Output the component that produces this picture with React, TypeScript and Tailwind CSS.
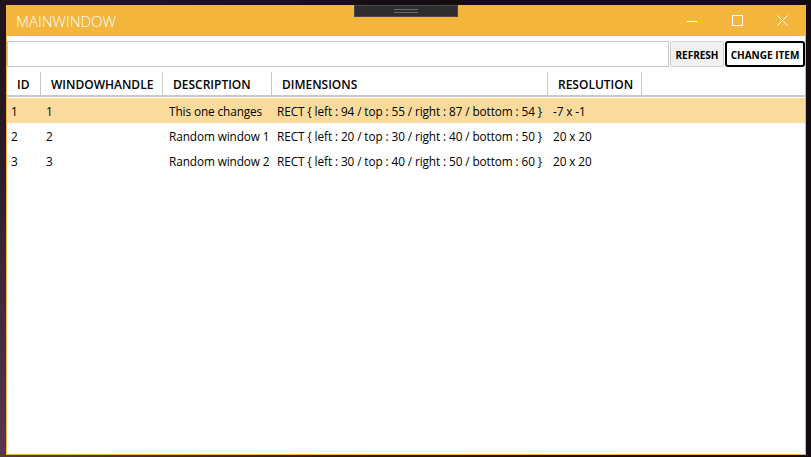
import React from 'react';

const COLUMNS = [
  { key: 'id', label: 'ID', width: 34, pad: 4 },
  { key: 'handle', label: 'WINDOWHANDLE', width: 122, pad: 5 },
  { key: 'description', label: 'DESCRIPTION', width: 109, pad: 6 },
  { key: 'dimensions', label: 'DIMENSIONS', width: 276, pad: 5 },
  { key: 'resolution', label: 'RESOLUTION', width: 94, pad: 5 },
] as const;

type Row = Record<(typeof COLUMNS)[number]['key'], string>;

const ROWS: Row[] = [
  {
    id: '1',
    handle: '1',
    description: 'This one changes',
    dimensions: 'RECT { left : 94 / top : 55 / right : 87 / bottom : 54 }',
    resolution: '-7 x -1',
  },
  {
    id: '2',
    handle: '2',
    description: 'Random window 1',
    dimensions: 'RECT { left : 20 / top : 30 / right : 40 / bottom : 50 }',
    resolution: '20 x 20',
  },
  {
    id: '3',
    handle: '3',
    description: 'Random window 2',
    dimensions: 'RECT { left : 30 / top : 40 / right : 50 / bottom : 60 }',
    resolution: '20 x 20',
  },
];

const FONT = { fontFamily: '"Open Sans", "Noto Sans", sans-serif' };

function TitleBar() {
  return (
    <div className="relative flex h-[31px] items-center bg-[#f3b53c] pl-[9px] text-white">
      <span className="mt-[1px] text-[15px] font-light">MAINWINDOW</span>

      {/* drag handle hanging from the top edge */}
      <div className="absolute left-[347px] top-0 flex h-[12px] w-[104px] items-center justify-center border border-[#4a4a4a] bg-[#2e2e2e]">
        <div className="flex w-[24px] flex-col gap-[2px]">
          <div className="h-px bg-[#6a6a6a]" />
          <div className="h-px bg-[#6a6a6a]" />
        </div>
      </div>

      <div className="ml-auto flex h-full items-center">
        <button className="flex h-full w-[46px] items-center justify-center">
          <svg width="10" height="10" viewBox="0 0 10 10">
            <line x1="0" y1="5.5" x2="10" y2="5.5" stroke="white" strokeWidth="1" />
          </svg>
        </button>
        <button className="flex h-full w-[44px] items-center justify-center">
          <svg width="11" height="11" viewBox="0 0 11 11">
            <rect x="0.5" y="0.5" width="10" height="10" fill="none" stroke="white" strokeWidth="1" />
          </svg>
        </button>
        <button className="flex h-full w-[46px] items-center justify-center">
          <svg width="11" height="11" viewBox="0 0 11 11">
            <path d="M0.5 0.5 L10.5 10.5 M10.5 0.5 L0.5 10.5" stroke="white" strokeWidth="1" />
          </svg>
        </button>
      </div>
    </div>
  );
}

function Toolbar() {
  return (
    <div className="mt-[5px] flex h-[26px]">
      <input className="h-full flex-1 border border-[#c6c6c6] bg-white outline-none" />
      <button className="ml-px h-full w-[54px] rounded-[2px] border border-[#d0d0d0] bg-[#f1f1f1] pt-[2px] text-[10px] font-bold text-black">
        REFRESH
      </button>
      <button className="ml-px h-full w-[80px] rounded-[3px] border-2 border-black bg-white pt-[2px] text-[10px] font-bold text-black">
        CHANGE ITEM
      </button>
    </div>
  );
}

function Table() {
  return (
    <div className="mt-px flex flex-col">
      <div className="flex h-[29px] border-b-2 border-[#c9c9c9]">
        {COLUMNS.map((col) => (
          <div key={col.key} style={{ width: col.width }} className="flex items-center pt-[7px]">
            <span className="flex-1 pl-[10px] text-[12px] font-semibold text-black">{col.label}</span>
            <div className="h-[23px] w-px self-end bg-[#c8c8c8]" />
          </div>
        ))}
      </div>
      <div className="pt-px">
        {ROWS.map((row, i) => (
          <div
            key={row.id}
            className={i === 0 ? 'flex h-[25px] items-center bg-[#f9dc9d] pt-[2px]' : 'flex h-[25px] items-center pt-[2px]'}
          >
            {COLUMNS.map((col) => (
              <div
                key={col.key}
                style={{ width: col.width, paddingLeft: col.pad }}
                className="whitespace-nowrap text-[11.8px] tracking-[-0.1px] text-black"
              >
                {row[col.key]}
              </div>
            ))}
          </div>
        ))}
      </div>
    </div>
  );
}

export default function App() {
  return (
    <div
      style={FONT}
      className="h-[457px] w-[811px] overflow-hidden bg-[radial-gradient(circle_at_0%_100%,#5a3550_0%,#2a1a26_35%,#120b10_70%)] pb-[2px] pl-[6px] pr-[5px] pt-[5px]"
    >
      <div className="flex h-[450px] w-[800px] flex-col border-x border-b border-[#f3b53c] bg-white">
        <TitleBar />
        <Toolbar />
        <Table />
      </div>
    </div>
  );
}
